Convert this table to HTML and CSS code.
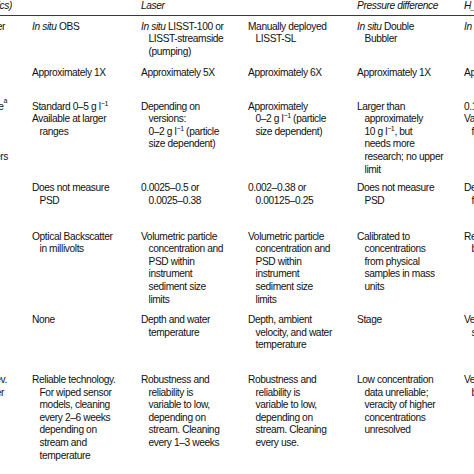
FILE: index.html
```html
<!DOCTYPE html>
<html lang="en">
<head>
<meta charset="utf-8">
<title>Sediment surrogate comparison</title>
<link rel="stylesheet" href="styles.css">
</head>
<body>
<table class="tbl">
  <colgroup>
    <col class="w0"><col class="w1"><col class="w2"><col class="w3"><col class="w4"><col class="w5">
  </colgroup>
  <thead>
    <tr class="head">
      <th class="c0"><div class="ln pr20"><i>Parameter (metrics)</i></div></th>
      <th></th>
      <th><i>Laser</i></th>
      <th></th>
      <th><i>Pressure difference</i></th>
      <th><i>H_ADCP</i></th>
    </tr>
  </thead>
  <tbody>
    <tr class="r1">
      <td class="c0"><div class="ln pr27">Surrogate meter</div></td>
      <td><div class="p"><i>In situ</i> OBS</div></td>
      <td><div class="p"><i>In situ</i> LISST-100 or<br>LISST-streamside<br>(pumping)</div></td>
      <td><div class="p">Manually deployed<br>LISST-SL</div></td>
      <td><div class="p"><i>In situ</i> Double<br>Bubbler</div></td>
      <td><div class="p"><i>In situ</i> H-ADCP</div></td>
    </tr>
    <tr class="r2">
      <td class="c0"></td>
      <td><div class="p">Approximately 1X</div></td>
      <td><div class="p">Approximately 5X</div></td>
      <td><div class="p">Approximately 6X</div></td>
      <td><div class="p">Approximately 1X</div></td>
      <td><div class="p">Approximately 10X</div></td>
    </tr>
    <tr class="r3">
      <td class="c0">
        <div class="ln pr25">Concentration range<sup>a</sup></div>
        <div class="ln"></div><div class="ln"></div><div class="ln"></div>
        <div class="ln pr24">particle diameters</div>
      </td>
      <td><div class="p">Standard 0–5 g l<sup>−1</sup></div><div class="p">Available at larger<br>ranges</div></td>
      <td><div class="p">Depending on<br>versions:<br>0–2 g l<sup>−1</sup> (particle<br>size dependent)</div></td>
      <td><div class="p">Approximately<br>0–2 g l<sup>−1</sup> (particle<br>size dependent)</div></td>
      <td><div class="p">Larger than<br>approximately<br>10 g l<sup>−1</sup>, but<br>needs more<br>research; no upper<br>limit</div></td>
      <td><div class="p">0.1–20 g l<sup>−1</sup></div><div class="p">Varies with<br>frequency</div></td>
    </tr>
    <tr class="r4">
      <td class="c0"></td>
      <td><div class="p">Does not measure<br>PSD</div></td>
      <td><div class="p">0.0025–0.5 or<br>0.0025–0.38</div></td>
      <td><div class="p">0.002–0.38 or<br>0.00125–0.25</div></td>
      <td><div class="p">Does not measure<br>PSD</div></td>
      <td><div class="p">Depends on<br>frequency</div></td>
    </tr>
    <tr class="r5">
      <td class="c0"></td>
      <td><div class="p">Optical Backscatter<br>in millivolts</div></td>
      <td><div class="p">Volumetric particle<br>concentration and<br>PSD within<br>instrument<br>sediment size<br>limits</div></td>
      <td><div class="p">Volumetric particle<br>concentration and<br>PSD within<br>instrument<br>sediment size<br>limits</div></td>
      <td><div class="p">Calibrated to<br>concentrations<br>from physical<br>samples in mass<br>units</div></td>
      <td><div class="p">Relative<br>backscatter</div></td>
    </tr>
    <tr class="r6">
      <td class="c0"></td>
      <td><div class="p">None</div></td>
      <td><div class="p">Depth and water<br>temperature</div></td>
      <td><div class="p">Depth, ambient<br>velocity, and water<br>temperature</div></td>
      <td><div class="p">Stage</div></td>
      <td><div class="p">Velocity,<br>stage</div></td>
    </tr>
    <tr class="r7">
      <td class="c0">
        <div class="ln pr25">Operation and maintenance, rev.</div>
        <div class="ln pr28">per meter</div>
      </td>
      <td><div class="p">Reliable technology.<br>For wiped sensor<br>models, cleaning<br>every 2–6 weeks<br>depending on<br>stream and<br>temperature</div></td>
      <td><div class="p">Robustness and<br>reliability is<br>variable to low,<br>depending on<br>stream. Cleaning<br>every 1–3 weeks</div></td>
      <td><div class="p">Robustness and<br>reliability is<br>variable to low,<br>depending on<br>stream. Cleaning<br>every use.</div></td>
      <td><div class="p">Low concentration<br>data unreliable;<br>veracity of higher<br>concentrations<br>unresolved</div></td>
      <td><div class="p">Very robust;<br>biofouling</div></td>
    </tr>
  </tbody>
</table>
</body>
</html>
```

FILE: styles.css
```css
html, body {
  margin: 0;
  padding: 0;
  width: 474px;
  height: 474px;
  overflow: hidden;
  background: #ffffff;
}

body {
  font-family: "Liberation Sans", Arial, sans-serif;
  font-size: 10.2px;
  letter-spacing: -0.38px;
  line-height: 12.6px;
  color: #111111;
}

.tbl {
  border-collapse: separate;
  border-spacing: 0;
  table-layout: fixed;
  width: 564px;
  margin-top: -0.5px;
}

.w0 { width: 32px; }
.w1 { width: 109px; }
.w2 { width: 107px; }
.w3 { width: 109px; }
.w4 { width: 107px; }
.w5 { width: 100px; }

th, td {
  padding: 0;
  text-align: left;
  vertical-align: top;
  white-space: nowrap;
}

th {
  font-weight: normal;
  padding-bottom: 3.4px;
  border-bottom: 1.2px solid #3a3a3a;
}

td {
  padding-top: 4.2px;
}

.r1 { height: 46.6px; }
.r2 { height: 33.4px; }
.r3 { height: 81.6px; }
.r4 { height: 48.4px; }
.r5 { height: 83.3px; }
.r6 { height: 60px; }
.r7 { height: 110px; }

.p {
  padding-left: 7.5px;
  text-indent: -7.5px;
}

.ln {
  display: flex;
  justify-content: flex-end;
  height: 12.6px;
  white-space: nowrap;
}

.pr20 { padding-right: 20px; }
.pr24 { padding-right: 24px; }
.pr25 { padding-right: 25px; }
.pr27 { padding-right: 27px; }
.pr28 { padding-right: 28px; }

sup {
  font-size: 7px;
  line-height: 0;
  vertical-align: 4px;
}

i { font-style: italic; }
```
